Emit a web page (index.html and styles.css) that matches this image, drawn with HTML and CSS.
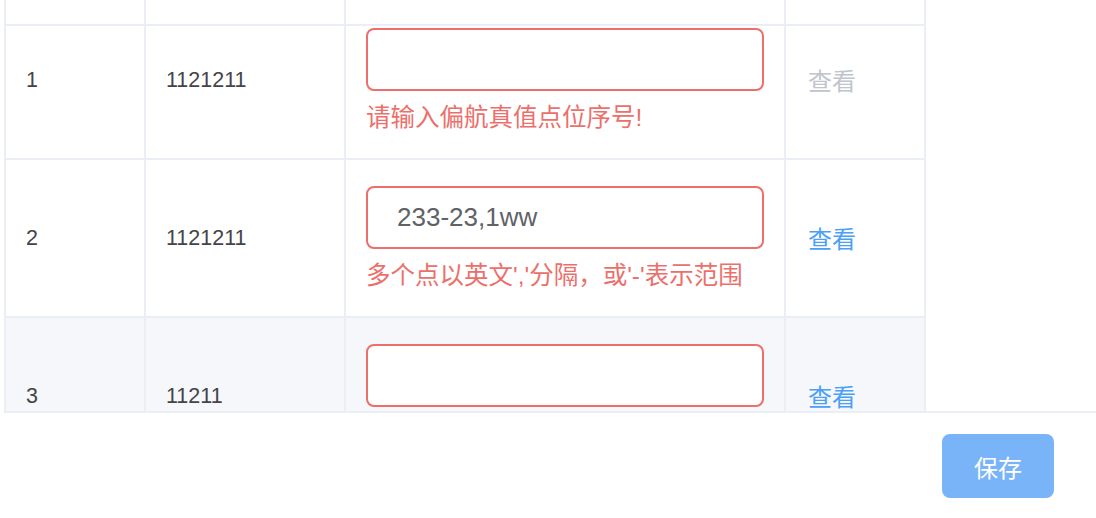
FILE: index.html
```html
<!DOCTYPE html>
<html lang="zh-CN">
<head>
<meta charset="utf-8">
<title>偏航真值点位</title>
<link rel="stylesheet" href="styles.css">
</head>
<body>
<div class="page">
  <div class="table-wrap">
    <div class="table-head">
      <table class="grid">
        <colgroup><col class="c1"><col class="c2"><col class="c3"><col class="c4"></colgroup>
        <tr><th></th><th></th><th></th><th></th></tr>
      </table>
    </div>
    <div class="table-body">
      <table class="grid scrolled">
        <colgroup><col class="c1"><col class="c2"><col class="c3"><col class="c4"></colgroup>
        <tr>
          <td class="num">1</td>
          <td class="num">1121211</td>
          <td>
            <div class="field"><input class="input" type="text" value=""></div>
            <div class="error">请输入偏航真值点位序号!</div>
          </td>
          <td><span class="link disabled">查看</span></td>
        </tr>
        <tr>
          <td class="num">2</td>
          <td class="num">1121211</td>
          <td>
            <div class="field"><input class="input" type="text" value="233-23,1ww"></div>
            <div class="error">多个点以英文','分隔，或'-'表示范围</div>
          </td>
          <td><span class="link">查看</span></td>
        </tr>
        <tr class="hover">
          <td class="num">3</td>
          <td class="num">11211</td>
          <td>
            <div class="field"><input class="input" type="text" value=""></div>
            <div class="error"></div>
          </td>
          <td><span class="link">查看</span></td>
        </tr>
      </table>
    </div>
  </div>
  <div class="footer">
    <button class="save" type="button">保存</button>
  </div>
</div>
</body>
</html>
```

FILE: styles.css
```css
* { box-sizing: border-box; }
html, body {
  margin: 0;
  padding: 0;
  background: #ffffff;
  overflow: hidden;
}
body {
  font-family: "Liberation Sans", "Noto Sans CJK SC", sans-serif;
  color: #444448;
}
.page {
  width: 1096px;
  height: 518px;
  padding-left: 4px;
}
.table-wrap {
  border-left: 2px solid #ebeef5;
  border-bottom: 2px solid #ebeef5;
}
.grid {
  border-collapse: separate;
  border-spacing: 0;
  table-layout: fixed;
  width: 920px;
}
.c1 { width: 140px; }
.c2 { width: 200px; }
.c3 { width: 440px; }
.c4 { width: 140px; }
.grid th {
  height: 26px;
  padding: 0;
  border-right: 2px solid #ebeef5;
  border-bottom: 2px solid #ebeef5;
  background: #ffffff;
}
.table-body {
  height: 385px;
  overflow: hidden;
}
.scrolled {
  margin-top: -24px;
}
.grid td {
  padding: 26px 20px;
  vertical-align: middle;
  border-right: 2px solid #ebeef5;
  border-bottom: 2px solid #ebeef5;
  background: #ffffff;
}
.grid tr.hover td {
  background: #f5f7fa;
}
.num {
  font-size: 21.5px;
  padding-left: 21px;
  color: #444448;
}
.field {
  height: 63px;
}
.input {
  display: block;
  width: 100%;
  height: 63px;
  margin: 0;
  padding: 0 29px;
  border: 2px solid #ec6f6b;
  border-radius: 8px;
  background: #ffffff;
  font-family: "Liberation Sans", "Noto Sans CJK SC", sans-serif;
  font-size: 26px;
  color: #606266;
  outline: none;
}
.error {
  margin-top: 12px;
  height: 29px;
  line-height: 29px;
  font-size: 24.5px;
  color: #ec6f6b;
  white-space: nowrap;
}
.link {
  display: block;
  padding-left: 2px;
  line-height: 30px;
  font-family: "Noto Sans CJK SC", sans-serif;
  font-size: 24px;
  color: #4a9ff9;
}
.link.disabled {
  color: #c0c4cc;
}
.footer {
  display: flex;
  justify-content: flex-end;
  padding-top: 21px;
  padding-right: 42px;
}
.save {
  width: 112px;
  height: 64px;
  border: none;
  border-radius: 8px;
  background: #79b4f9;
  color: #ffffff;
  font-family: "Noto Sans CJK SC", sans-serif;
  font-size: 24px;
  padding: 0;
}
```
